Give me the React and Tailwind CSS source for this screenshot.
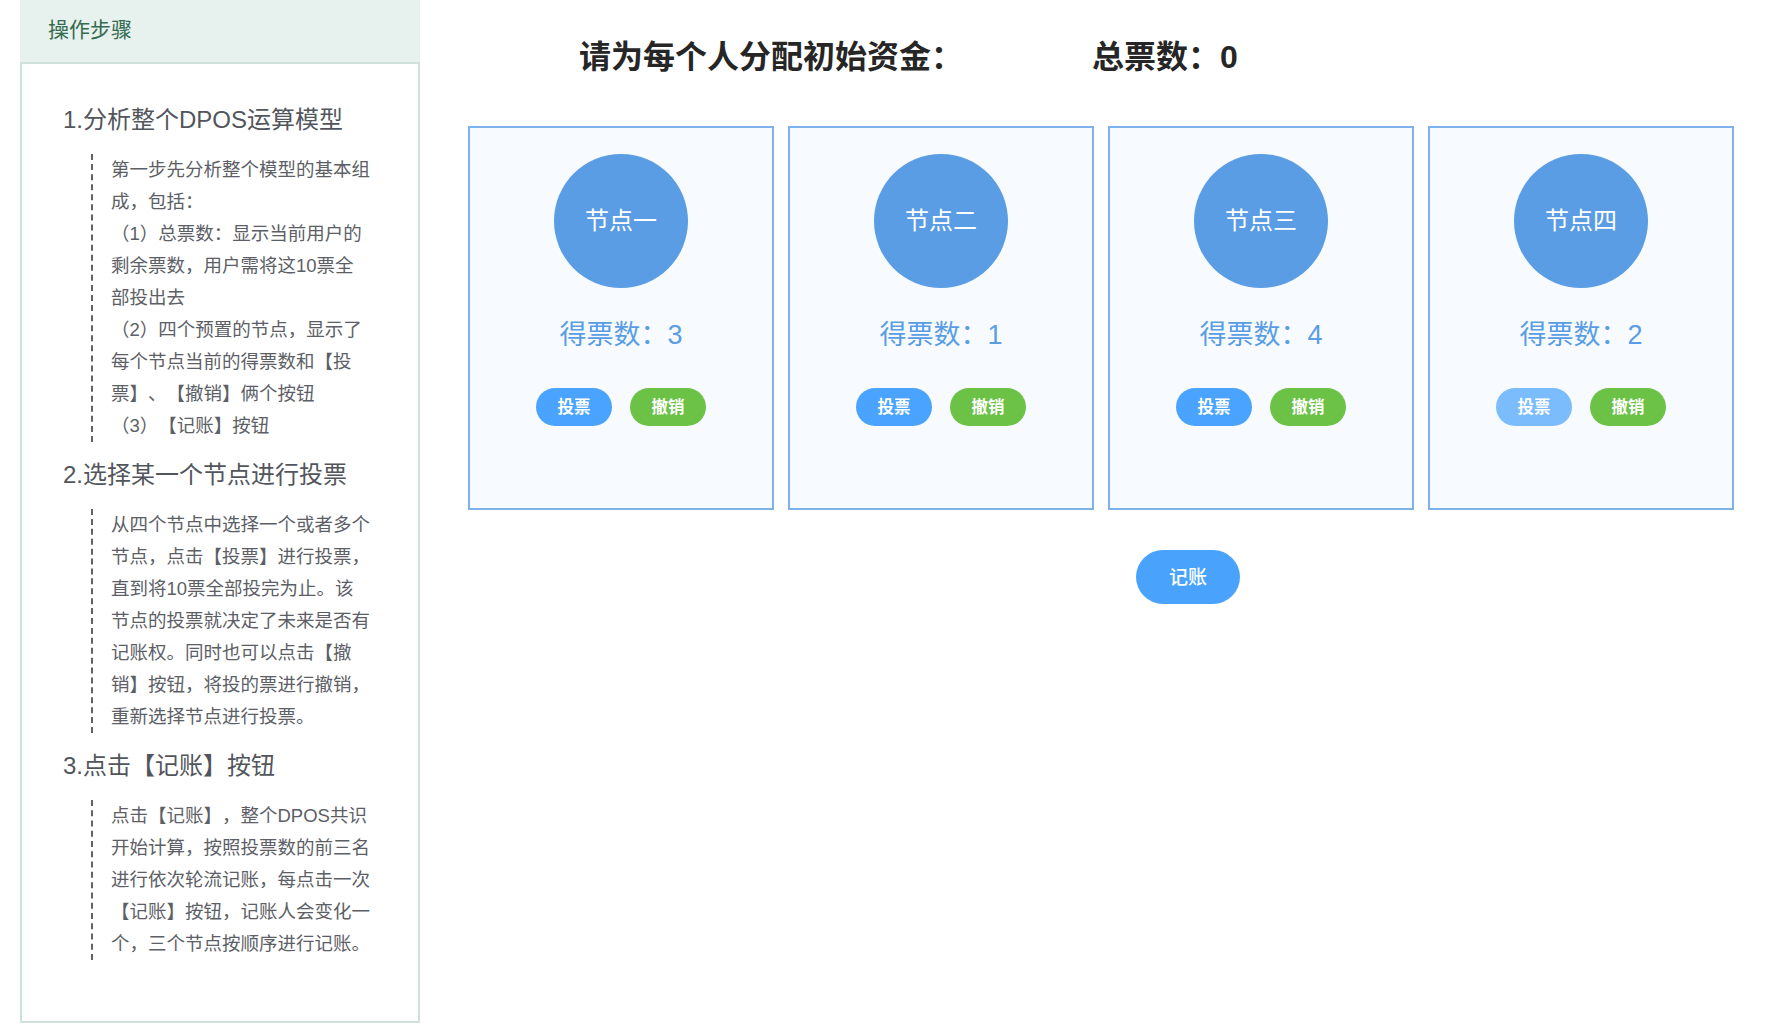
import React from "react";

const steps = [
  {
    title: "1.分析整个DPOS运算模型",
    lines: [
      "第一步先分析整个模型的基本组",
      "成，包括：",
      "（1）总票数：显示当前用户的",
      "剩余票数，用户需将这10票全",
      "部投出去",
      "（2）四个预置的节点，显示了",
      "每个节点当前的得票数和【投",
      "票】、【撤销】俩个按钮",
      "（3）【记账】按钮",
    ],
  },
  {
    title: "2.选择某一个节点进行投票",
    lines: [
      "从四个节点中选择一个或者多个",
      "节点，点击【投票】进行投票，",
      "直到将10票全部投完为止。该",
      "节点的投票就决定了未来是否有",
      "记账权。同时也可以点击【撤",
      "销】按钮，将投的票进行撤销，",
      "重新选择节点进行投票。",
    ],
  },
  {
    title: "3.点击【记账】按钮",
    lines: [
      "点击【记账】，整个DPOS共识",
      "开始计算，按照投票数的前三名",
      "进行依次轮流记账，每点击一次",
      "【记账】按钮，记账人会变化一",
      "个，三个节点按顺序进行记账。",
    ],
  },
];

const nodes = [
  { name: "节点一", votes: 3, disabled: false },
  { name: "节点二", votes: 1, disabled: false },
  { name: "节点三", votes: 4, disabled: false },
  { name: "节点四", votes: 2, disabled: true },
];

export default function App() {
  return (
    <div className="flex min-h-[1034px] w-full bg-white [text-spacing-trim:space-all] font-['Liberation_Sans','Noto_Sans_CJK_SC',sans-serif]">
      {/* Sidebar */}
      <aside className="ml-[20px] w-[400px] shrink-0 flex flex-col">
        <div className="h-[62px] bg-[#e7f1ee] pl-[28px] flex items-center">
          <span className="text-[21px] leading-[30px] text-[#356b4e] -mt-[2px]">操作步骤</span>
        </div>
        <div className="border-2 border-[#cfe1db] pl-[41px] pt-[23px] pb-[61px]">
          {steps.map((s) => (
            <section key={s.title}>
              <h2 className="mt-[15px] h-[36px] leading-[36px] text-[24px] text-[#52565c] whitespace-nowrap">
                {s.title}
              </h2>
              <div className="mt-[16px] ml-[28px] border-l-2 border-dashed border-[#606266] pl-[18px] text-[18.5px] leading-[32px] text-[#5c6066]">
                {s.lines.map((l, i) => (
                  <div key={i} className="whitespace-nowrap">
                    {l}
                  </div>
                ))}
              </div>
            </section>
          ))}
        </div>
      </aside>

      {/* Main */}
      <main className="ml-[48px] flex-1 flex flex-col">
        <div className="mt-[35px] flex items-center h-[44px] leading-[44px] text-[32px] font-bold text-[#262626]">
          <span className="ml-[111px]">请为每个人分配初始资金：</span>
          <span className="ml-[129px]">总票数：0</span>
        </div>

        <div className="mt-[47px] flex gap-[14px]">
          {nodes.map((n) => (
            <div
              key={n.name}
              className="w-[306px] h-[384px] border-2 border-[#7db2ea] bg-[#f7fbff] flex flex-col items-center"
            >
              <div className="mt-[26px] w-[134px] h-[134px] rounded-full bg-[#5a9de4] flex items-center justify-center text-white text-[24px] leading-none">
                {n.name}
              </div>
              <div className="mt-[27px] h-[40px] leading-[40px] text-[27px] text-[#5a9de4]">
                得票数：{n.votes}
              </div>
              <div className="mt-[33px] flex gap-[18px]">
                <button
                  className={
                    n.disabled
                      ? "w-[76px] h-[38px] rounded-full bg-[#7bbcfd] text-white font-bold text-[16.5px] leading-none"
                      : "w-[76px] h-[38px] rounded-full bg-[#4aa3fe] text-white font-bold text-[16.5px] leading-none"
                  }
                >
                  投票
                </button>
                <button className="w-[76px] h-[38px] rounded-full bg-[#6cc247] text-white font-bold text-[16.5px] leading-none">
                  撤销
                </button>
              </div>
            </div>
          ))}
        </div>

        <div className="mt-[40px]">
          <button className="ml-[668px] w-[104px] h-[54px] rounded-full bg-[#49a3fd] text-white text-[19px] font-medium leading-none">
            记账
          </button>
        </div>
      </main>
    </div>
  );
}
